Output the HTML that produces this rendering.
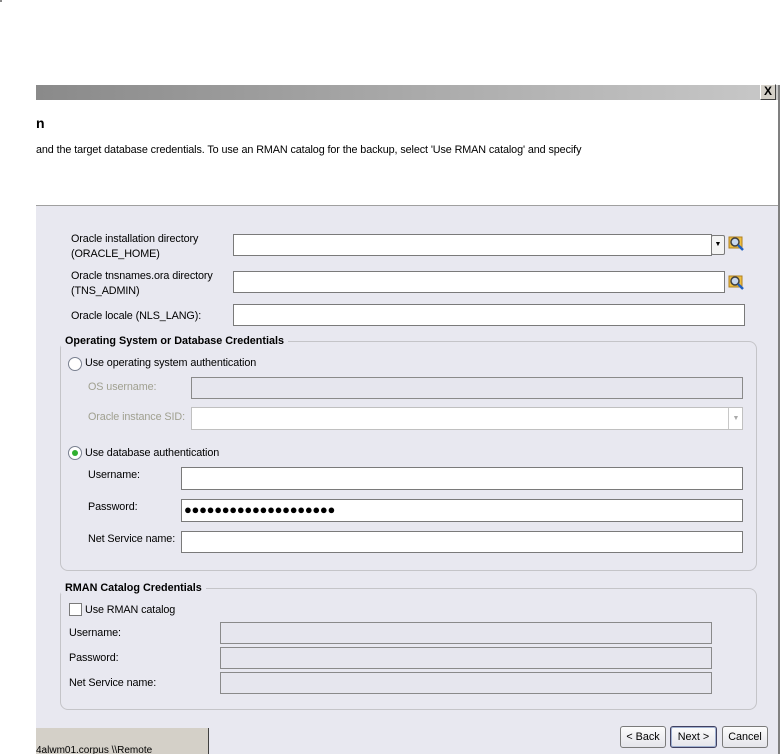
<!DOCTYPE html>
<html><head><style>
body{margin:0;width:781px;height:754px;background:#fff;position:relative;overflow:hidden;font-family:"Liberation Sans",sans-serif;font-size:10.8px;color:#000}
.a{position:absolute}
.inp{position:absolute;background:#fff;border:1px solid #7a7a7a;box-sizing:border-box}
.dis{background:#e6e6ee;border-color:#8a8a8a}
.lbl{position:absolute;white-space:nowrap;letter-spacing:-0.1px}
.g{color:#a0a090}
.grp{position:absolute;border:1px solid #c4c4c8;border-radius:8px;box-sizing:border-box}
.gt{position:absolute;font-weight:bold;background:#e8e8f0;padding:0 4px 0 4px;white-space:nowrap}
.btn{position:absolute;border:1px solid #7a7a7a;border-radius:3px;background:linear-gradient(#fcfcfc,#e4e4ea);box-sizing:border-box;text-align:center;line-height:21px}
.rad{position:absolute;width:12px;height:12px;border:1px solid #7a8090;border-radius:50%;background:#fff}
</style></head><body>
<div class="a" style="left:0;top:0;width:2px;height:2px;background:#888"></div>
<div class="a" style="left:36px;top:85px;width:742px;height:15px;background:linear-gradient(90deg,#8a8a8a,#c8c8c8)"></div>
<div class="a" style="left:760px;top:84px;width:14px;height:14px;background:#d4d0c8;border:1px solid;border-color:#fff #404040 #404040 #fff;font-weight:bold;font-size:12px;line-height:13px;text-align:center">X</div>
<div class="a" style="left:36px;top:100px;width:742px;height:105px;background:#fff"></div>
<div class="lbl" style="left:36px;top:115px;font-size:14px;font-weight:bold">n</div>
<div class="lbl" style="left:36px;top:144px">and the target database credentials. To use an RMAN catalog for the backup, select 'Use RMAN catalog' and specify</div>
<div class="a" style="left:36px;top:205px;width:742px;height:1px;background:#a0a0a0"></div>
<div class="a" style="left:36px;top:206px;width:742px;height:548px;background:#e8e8f0"></div>
<div class="a" style="left:778px;top:85px;width:2px;height:669px;background:#808080"></div>

<div class="lbl" style="left:71px;top:232px;line-height:15px">Oracle installation directory<br>(ORACLE_HOME)</div>
<div class="inp" style="left:233px;top:234px;width:479px;height:22px"></div>
<div class="a" style="left:711px;top:235px;width:14px;height:20px;border:1px solid #7a7a7a;border-radius:2px;background:#f4f4f4;box-sizing:border-box;font-size:7px;text-align:center;line-height:18px">▼</div>
<svg class="a" style="left:728px;top:234px" width="18" height="18"><rect x="1" y="3" width="13" height="11" fill="#f0c040" stroke="#b08020"/><circle cx="7" cy="8" r="4" fill="#c8d8f0" stroke="#404040" stroke-width="1.5"/><line x1="10" y1="11" x2="15" y2="16" stroke="#2060c0" stroke-width="2.5"/></svg>
<div class="lbl" style="left:71px;top:269px;line-height:15px">Oracle tnsnames.ora directory<br>(TNS_ADMIN)</div>
<div class="inp" style="left:233px;top:271px;width:492px;height:22px"></div>
<svg class="a" style="left:728px;top:273px" width="18" height="18"><rect x="1" y="3" width="13" height="11" fill="#f0c040" stroke="#b08020"/><circle cx="7" cy="8" r="4" fill="#c8d8f0" stroke="#404040" stroke-width="1.5"/><line x1="10" y1="11" x2="15" y2="16" stroke="#2060c0" stroke-width="2.5"/></svg>
<div class="lbl" style="left:71px;top:310px">Oracle locale (NLS_LANG):</div>
<div class="inp" style="left:233px;top:304px;width:512px;height:22px"></div>

<div class="grp" style="left:60px;top:341px;width:697px;height:230px"></div>
<div class="gt" style="left:61px;top:335px">Operating System or Database Credentials</div>
<div class="rad" style="left:68px;top:357px"></div>
<div class="lbl" style="left:85px;top:357px">Use operating system authentication</div>
<div class="lbl g" style="left:88px;top:381px">OS username:</div>
<div class="inp dis" style="left:191px;top:377px;width:552px;height:22px"></div>
<div class="lbl g" style="left:88px;top:411px">Oracle instance SID:</div>
<div class="inp" style="left:191px;top:407px;width:552px;height:23px;border-color:#c0c0c0"></div>
<div class="a" style="left:728px;top:408px;width:14px;height:21px;border-left:1px solid #c8c8c8;color:#aaa;font-size:7px;text-align:center;line-height:21px">▼</div>
<div class="rad" style="left:68px;top:446px"></div>
<div class="a" style="left:72px;top:450px;width:6px;height:6px;border-radius:50%;background:#30b030"></div>
<div class="lbl" style="left:85px;top:447px">Use database authentication</div>
<div class="lbl" style="left:88px;top:469px">Username:</div>
<div class="inp" style="left:181px;top:467px;width:562px;height:23px"></div>
<div class="lbl" style="left:88px;top:501px">Password:</div>
<div class="inp" style="left:181px;top:499px;width:562px;height:23px;font-size:13px;line-height:20px;padding-left:2px;letter-spacing:-0.3px">●●●●●●●●●●●●●●●●●●●●</div>
<div class="lbl" style="left:88px;top:533px">Net Service name:</div>
<div class="inp" style="left:181px;top:531px;width:562px;height:22px"></div>

<div class="grp" style="left:60px;top:588px;width:697px;height:122px"></div>
<div class="gt" style="left:61px;top:582px">RMAN Catalog Credentials</div>
<div class="a" style="left:69px;top:603px;width:11px;height:11px;border:1px solid #7a7a7a;background:#fff"></div>
<div class="lbl" style="left:85px;top:604px">Use RMAN catalog</div>
<div class="lbl" style="left:69px;top:627px">Username:</div>
<div class="inp dis" style="left:220px;top:622px;width:492px;height:22px"></div>
<div class="lbl" style="left:69px;top:652px">Password:</div>
<div class="inp dis" style="left:220px;top:647px;width:492px;height:22px"></div>
<div class="lbl" style="left:69px;top:677px">Net Service name:</div>
<div class="inp dis" style="left:220px;top:672px;width:492px;height:22px"></div>

<div class="btn" style="left:620px;top:726px;width:46px;height:22px">&lt; Back</div>
<div class="btn" style="left:670px;top:726px;width:47px;height:22px;border-color:#404060;box-shadow:inset 0 0 0 1px #a0b0d0">Next &gt;</div>
<div class="btn" style="left:722px;top:726px;width:46px;height:22px">Cancel</div>

<div class="a" style="left:36px;top:728px;width:172px;height:26px;background:#d4d0c8;border-right:1px solid #404040;overflow:hidden"><div style="position:absolute;top:17px;left:0;font-size:10px;white-space:nowrap">4alwm01.corpus   \\Remote</div></div>
</body></html>
